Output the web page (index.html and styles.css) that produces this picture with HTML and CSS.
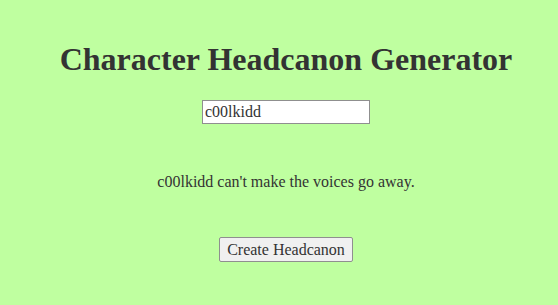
FILE: index.html
```html
<!DOCTYPE html>
<html lang="en">
	<head>
		<meta charset="UTF-8">
		<meta name="viewport" content="width=device-width, initial-scale=1.0">
		<title>Character Headcanon Generator</title>
		<link rel="stylesheet" href="styles.css">
	</head>
	<body>
		<div class="generator">
			<h1 class="title">Character Headcanon Generator</h1>
			<input class="name-input" type="text" value="c00lkidd">
			<p class="result">c00lkidd can't make the voices go away.</p>
			<button class="create-btn">Create Headcanon</button>
		</div>
	</body>
</html>
```

FILE: styles.css
```css
body {
    margin: 0;
    height: 100vh;
    overflow: hidden;
    background: #bfffa0;
    font-family: "Liberation Serif", "Times New Roman", serif;
    color: #333333;
}

/* Coluna central */
.generator {
    display: flex;
    flex-direction: column;
    align-items: center;
    padding: 42px 0 0 14px;
}

.title {
    margin: 0;
    font-size: 32px;
    font-weight: bold;
    line-height: 35px;
}

.name-input {
    margin-top: 23px;
    width: 162px;
    height: 20px;
    padding: 1px 2px;
    border: 1px solid #8f8f8f;
    font-family: inherit;
    font-size: 16px;
    color: #333333;
    background: #ffffff;
    box-sizing: content-box;
}

.result {
    margin: 49px 0 0;
    font-size: 16px;
    line-height: 18px;
}

.create-btn {
    margin-top: 46px;
    padding: 1px 7px;
    height: 25px;
    font-family: inherit;
    font-size: 16px;
    color: #333333;
    background: #f0f0f0;
    border: 1px solid #8f8f8f;
    border-radius: 2px;
}
```
